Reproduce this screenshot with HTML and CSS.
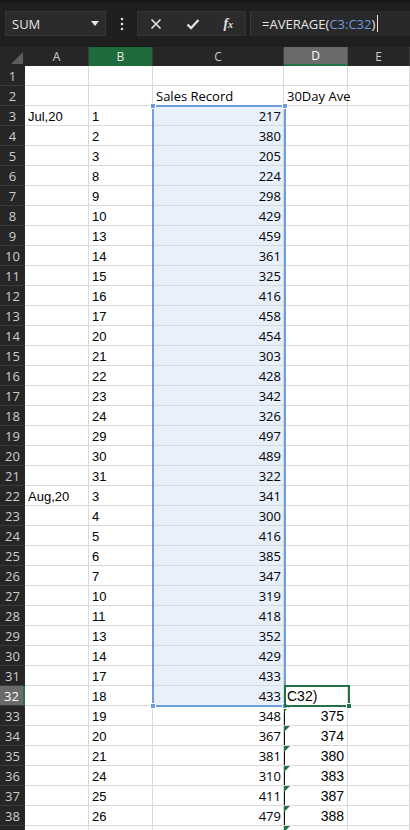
FILE: index.html
```html
<!DOCTYPE html>
<html>
<head>
<meta charset="utf-8">
<link rel="stylesheet" href="styles.css">
</head>
<body>
<div class="toolbar">
  <div class="namebox"><span>SUM</span><span class="caret"></span></div>
  <div class="more"><svg width="4" height="14" viewBox="0 0 4 14"><circle cx="2" cy="2" r="1.3" fill="#e0e0e0"/><circle cx="2" cy="7" r="1.3" fill="#e0e0e0"/><circle cx="2" cy="12" r="1.3" fill="#e0e0e0"/></svg></div>
  <div class="btns">
    <svg width="12" height="12" viewBox="0 0 12 12"><path d="M1.5 1.5 L10.5 10.5 M10.5 1.5 L1.5 10.5" stroke="#e0e0e0" stroke-width="1.7" fill="none"/></svg>
    <svg width="14" height="12" viewBox="0 0 14 12"><path d="M1.5 6.5 L5 10 L12.5 2" stroke="#e0e0e0" stroke-width="2.4" fill="none"/></svg>
    <span class="fx">f<span class="fxs">x</span></span>
  </div>
  <div class="formula"><span>=AVERAGE(<span class="ref">C3:C32</span>)</span><span class="cursor"></span></div>
</div>
<div class="sheet">
  <div class="corner"></div><div class="ch">A</div><div class="ch selcol">B</div><div class="ch">C</div><div class="ch actcol">D</div><div class="ch">E</div>

  <div class="rh">1</div><div class="c"></div><div class="c"></div><div class="c"></div><div class="c"></div><div class="c"></div>
  <div class="rh">2</div><div class="c"></div><div class="c"></div><div class="c cal">Sales Record</div><div class="c cal">30Day Ave</div><div class="c"></div>
  <div class="rh">3</div><div class="c">Jul,20</div><div class="c">1</div><div class="c n s">217</div><div class="c"></div><div class="c"></div>
  <div class="rh">4</div><div class="c"></div><div class="c">2</div><div class="c n s">380</div><div class="c"></div><div class="c"></div>
  <div class="rh">5</div><div class="c"></div><div class="c">3</div><div class="c n s">205</div><div class="c"></div><div class="c"></div>
  <div class="rh">6</div><div class="c"></div><div class="c">8</div><div class="c n s">224</div><div class="c"></div><div class="c"></div>
  <div class="rh">7</div><div class="c"></div><div class="c">9</div><div class="c n s">298</div><div class="c"></div><div class="c"></div>
  <div class="rh">8</div><div class="c"></div><div class="c">10</div><div class="c n s">429</div><div class="c"></div><div class="c"></div>
  <div class="rh">9</div><div class="c"></div><div class="c">13</div><div class="c n s">459</div><div class="c"></div><div class="c"></div>
  <div class="rh">10</div><div class="c"></div><div class="c">14</div><div class="c n s">361</div><div class="c"></div><div class="c"></div>
  <div class="rh">11</div><div class="c"></div><div class="c">15</div><div class="c n s">325</div><div class="c"></div><div class="c"></div>
  <div class="rh">12</div><div class="c"></div><div class="c">16</div><div class="c n s">416</div><div class="c"></div><div class="c"></div>
  <div class="rh">13</div><div class="c"></div><div class="c">17</div><div class="c n s">458</div><div class="c"></div><div class="c"></div>
  <div class="rh">14</div><div class="c"></div><div class="c">20</div><div class="c n s">454</div><div class="c"></div><div class="c"></div>
  <div class="rh">15</div><div class="c"></div><div class="c">21</div><div class="c n s">303</div><div class="c"></div><div class="c"></div>
  <div class="rh">16</div><div class="c"></div><div class="c">22</div><div class="c n s">428</div><div class="c"></div><div class="c"></div>
  <div class="rh">17</div><div class="c"></div><div class="c">23</div><div class="c n s">342</div><div class="c"></div><div class="c"></div>
  <div class="rh">18</div><div class="c"></div><div class="c">24</div><div class="c n s">326</div><div class="c"></div><div class="c"></div>
  <div class="rh">19</div><div class="c"></div><div class="c">29</div><div class="c n s">497</div><div class="c"></div><div class="c"></div>
  <div class="rh">20</div><div class="c"></div><div class="c">30</div><div class="c n s">489</div><div class="c"></div><div class="c"></div>
  <div class="rh">21</div><div class="c"></div><div class="c">31</div><div class="c n s">322</div><div class="c"></div><div class="c"></div>
  <div class="rh">22</div><div class="c">Aug,20</div><div class="c">3</div><div class="c n s">341</div><div class="c"></div><div class="c"></div>
  <div class="rh">23</div><div class="c"></div><div class="c">4</div><div class="c n s">300</div><div class="c"></div><div class="c"></div>
  <div class="rh">24</div><div class="c"></div><div class="c">5</div><div class="c n s">416</div><div class="c"></div><div class="c"></div>
  <div class="rh">25</div><div class="c"></div><div class="c">6</div><div class="c n s">385</div><div class="c"></div><div class="c"></div>
  <div class="rh">26</div><div class="c"></div><div class="c">7</div><div class="c n s">347</div><div class="c"></div><div class="c"></div>
  <div class="rh">27</div><div class="c"></div><div class="c">10</div><div class="c n s">319</div><div class="c"></div><div class="c"></div>
  <div class="rh">28</div><div class="c"></div><div class="c">11</div><div class="c n s">418</div><div class="c"></div><div class="c"></div>
  <div class="rh">29</div><div class="c"></div><div class="c">13</div><div class="c n s">352</div><div class="c"></div><div class="c"></div>
  <div class="rh">30</div><div class="c"></div><div class="c">14</div><div class="c n s">429</div><div class="c"></div><div class="c"></div>
  <div class="rh">31</div><div class="c"></div><div class="c">17</div><div class="c n s">433</div><div class="c"></div><div class="c"></div>
  <div class="rh act">32</div><div class="c"></div><div class="c">18</div><div class="c n s">433</div><div class="c edit">C32)</div><div class="c"></div>
  <div class="rh">33</div><div class="c"></div><div class="c">19</div><div class="c n">348</div><div class="c dv tri">375</div><div class="c"></div>
  <div class="rh">34</div><div class="c"></div><div class="c">20</div><div class="c n">367</div><div class="c dv tri">374</div><div class="c"></div>
  <div class="rh">35</div><div class="c"></div><div class="c">21</div><div class="c n">381</div><div class="c dv tri">380</div><div class="c"></div>
  <div class="rh">36</div><div class="c"></div><div class="c">24</div><div class="c n">310</div><div class="c dv tri">383</div><div class="c"></div>
  <div class="rh">37</div><div class="c"></div><div class="c">25</div><div class="c n">411</div><div class="c dv tri">387</div><div class="c"></div>
  <div class="rh">38</div><div class="c"></div><div class="c">26</div><div class="c n">479</div><div class="c dv tri">388</div><div class="c"></div>
  <div class="rh"></div><div class="c"></div><div class="c"></div><div class="c n"></div><div class="c dv tri"></div><div class="c"></div>

  <div class="sel"><span class="h tl"></span><span class="h tr"></span><span class="h bl"></span><span class="h br"></span></div>
  <div class="active"><span class="gh"></span></div>
</div>
</body>
</html>
```
FILE: styles.css
```css
* { box-sizing: border-box; }
body {
  margin: 0;
  width: 410px;
  height: 830px;
  overflow: hidden;
  background: #fff;
  font-family: "Liberation Sans", Arial, sans-serif;
}
.toolbar {
  height: 47px;
  background: #1f1f1f;
  border-top: 3px solid #191919;
  display: flex;
  align-items: flex-start;
  padding: 8px 0 0 5px;
  overflow: hidden;
}
.namebox {
  flex: 0 0 101px;
  height: 25px;
  background: #2b2b2b;
  border: 1px solid #363636;
  display: flex;
  align-items: center;
  justify-content: space-between;
  padding: 0 6px 0 6px;
  color: #e6e6e6;
  font: 13px "Open Sans", sans-serif;
}
.caret {
  width: 0;
  height: 0;
  border-left: 4px solid transparent;
  border-right: 4px solid transparent;
  border-top: 5px solid #e6e6e6;
}
.more {
  flex: 0 0 31px;
  height: 25px;
  display: flex;
  align-items: center;
  justify-content: center;
}
.btns {
  flex: 0 0 109px;
  height: 25px;
  background: #2b2b2b;
  border: 1px solid #333;
  display: flex;
  align-items: center;
  justify-content: space-around;
}
.fx {
  font: italic bold 14px "Liberation Serif", serif;
  color: #e0e0e0;
}
.fxs { font-size: 10px; }
.formula {
  flex: 1;
  margin-left: 4px;
  height: 25px;
  background: #292929;
  border-left: 1px solid #3a3a3a;
  display: flex;
  align-items: center;
  padding-left: 11px;
  color: #e6e6e6;
  font: 13px "Open Sans", sans-serif;
  white-space: nowrap;
}
.ref { color: #7098dc; }
.cursor {
  display: inline-block;
  width: 1px;
  height: 17px;
  background: #e6e6e6;
  margin-left: 2px;
}
.sheet {
  position: relative;
  display: grid;
  grid-template-columns: 25px 64px 64px 131px 64px 62px;
  grid-template-rows: 19px;
  grid-auto-rows: 20px;
}
.corner { background: #262626; position: relative; }
.corner::after {
  content: "";
  position: absolute;
  right: 2px;
  bottom: 2px;
  width: 12px;
  height: 12px;
  background: #5c5c5c;
  clip-path: polygon(100% 0, 100% 100%, 0 100%);
}
.ch {
  background: #262626;
  color: #cdcdcd;
  font: 12px "Open Sans", sans-serif;
  display: flex;
  align-items: center;
  justify-content: center;
  border-right: 1px solid #3a3a3a;
}
.ch.selcol { background: #1d6b3b; color: #e6e6e6; }
.ch.actcol { background: #6a6a6a; color: #fff; border-bottom: 2px solid #217346; border-right-color: #555; }
.rh {
  background: #262626;
  color: #cdcdcd;
  font: 13px "Open Sans", sans-serif;
  display: flex;
  align-items: center;
  justify-content: center;
  border-bottom: 1px solid #3a3a3a;
}
.rh.act { background: #6a6a6a; color: #fff; border-right: 2px solid #217346; }
.c {
  position: relative;
  border-right: 1px solid #d9d9d9;
  border-bottom: 1px solid #d9d9d9;
  font-size: 13px;
  line-height: 19px;
  padding: 1px 3px 0;
  white-space: nowrap;
  color: #000;
}
.cal { font-family: "Open Sans", sans-serif; }
.n { font-family: "Open Sans", sans-serif; text-align: right; padding-right: 2px; }
.s { background: #e8f0fc; }
.edit { font-size: 14px; }
.dv {
  font-size: 14px;
  text-align: right;
  padding-right: 3px;
  box-shadow: inset 1px 0 0 #111;
}
.tri::before {
  content: "";
  position: absolute;
  left: 0;
  top: 0;
  border-top: 6px solid #1e7145;
  border-right: 6px solid transparent;
}
.sel {
  position: absolute;
  left: 152px;
  top: 58px;
  width: 134px;
  height: 602px;
  border: 2px solid #6e9de0;
}
.h {
  position: absolute;
  width: 6px;
  height: 6px;
  background: #6e9de0;
  border: 1px solid #fff;
}
.tl { left: -4px; top: -4px; }
.tr { right: -4px; top: -4px; }
.bl { left: -4px; bottom: -4px; }
.br { right: -4px; bottom: -4px; }
.active {
  position: absolute;
  left: 284px;
  top: 638px;
  width: 66px;
  height: 22px;
  border: 2px solid #217346;
}
.gh {
  position: absolute;
  right: -4px;
  bottom: -4px;
  width: 6px;
  height: 6px;
  background: #217346;
  border: 1px solid #fff;
}
```
